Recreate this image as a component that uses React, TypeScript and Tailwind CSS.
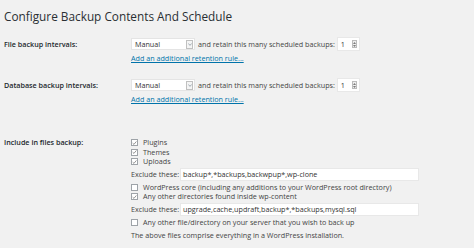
import React from "react";

function Check({ checked }: { checked?: boolean }) {
  return (
    <span className="inline-flex w-[7px] h-[7px] border border-[#9ea3a8] bg-white shrink-0 items-center justify-center">
      {checked && (
        <svg viewBox="0 0 8 8" className="w-[6px] h-[6px]">
          <path d="M1 4.2 L3.1 6.2 L7 1.5" fill="none" stroke="#666" strokeWidth="1.1" />
        </svg>
      )}
    </span>
  );
}

function CheckRow({ checked, label, className }: { checked?: boolean; label: string; className?: string }) {
  return (
    <div className={"flex items-center gap-[5px] h-[9.5px] " + (className || "")}>
      <Check checked={checked} />
      <span>{label}</span>
    </div>
  );
}

function IntervalRow({ label, className }: { label: string; className?: string }) {
  return (
    <div className={"flex " + (className || "")}>
      <div className="w-[127px] leading-[14px] font-semibold text-[#23282d]">{label}</div>
      <div>
        <div className="flex items-center h-[14px]">
          <div className="w-[64px] h-[12px] bg-white border border-[#e4e4e4] flex items-center justify-between pl-[3px] pr-[1px] text-[#333]">
            <span>Manual</span>
            <span className="w-[7px] h-[9px] border border-[#c0c0c0] bg-[#f4f4f4] flex items-center justify-center">
              <svg viewBox="0 0 6 4" className="w-[4px] h-[3px]">
                <path d="M0.5 0.8 L3 3.2 L5.5 0.8" fill="none" stroke="#6a7a8a" strokeWidth="1" />
              </svg>
            </span>
          </div>
          <span className="ml-[3px]">and retain this many scheduled backups:</span>
          <div className="ml-[2px] w-[23px] h-[14px] bg-white border border-[#e8e8e8] flex items-center justify-between pl-[3px] pr-[2px] text-[#333]">
            <span>1</span>
            <span className="w-[5px] h-[8px] border border-[#bbb] bg-[#eee] flex flex-col items-center justify-center gap-[1px]">
              <svg viewBox="0 0 4 2" className="w-[3px] h-[2px]"><path d="M0 2 L2 0 L4 2Z" fill="#555" /></svg>
              <svg viewBox="0 0 4 2" className="w-[3px] h-[2px]"><path d="M0 0 L2 2 L4 0Z" fill="#555" /></svg>
            </span>
          </div>
        </div>
        <a className="block mt-[2px] leading-[10px] text-[#0073aa] underline">Add an additional retention rule...</a>
      </div>
    </div>
  );
}

export default function App() {
  return (
    <div className="w-[474px] h-[248px] overflow-hidden bg-[#f1f1f1] pl-[4px] font-['Open_Sans',sans-serif] text-[7.2px] text-[#444]">
      <h2 className="pt-[7px] text-[11.8px] leading-[18px] text-[#2a2f33]">Configure Backup Contents And Schedule</h2>

      <IntervalRow label="File backup intervals:" className="mt-[12px]" />
      <IntervalRow label="Database backup intervals:" className="mt-[15px]" />

      <div className="flex mt-[34px]">
        <div className="w-[127px] leading-[9.5px] font-semibold text-[#23282d]">Include in files backup:</div>
        <div className="leading-[9.5px]">
          <CheckRow checked label="Plugins" />
          <CheckRow checked label="Themes" />
          <CheckRow checked label="Uploads" />
          <div className="flex items-center mt-[1.5px]">
            <span className="w-[49px]">Exclude these:</span>
            <div className="w-[239px] h-[13px] bg-white border border-[#e8e8e8] flex items-center pl-[2px] text-[#333]">
              backup*,*backups,backwpup*,wp-clone
            </div>
          </div>
          <CheckRow label="WordPress core (including any additions to your WordPress root directory)" className="mt-[1.5px]" />
          <CheckRow checked label="Any other directories found inside wp-content" />
          <div className="flex items-center mt-[1.5px]">
            <span className="w-[49px]">Exclude these:</span>
            <div className="w-[239px] h-[13px] bg-white border border-[#e8e8e8] flex items-center pl-[2px] text-[#333]">
              upgrade,cache,updraft,backup*,*backups,mysql.sql
            </div>
          </div>
          <CheckRow label="Any other file/directory on your server that you wish to back up" className="mt-[2px]" />
          <div className="mt-[3px]">The above files comprise everything in a WordPress installation.</div>
        </div>
      </div>
    </div>
  );
}
